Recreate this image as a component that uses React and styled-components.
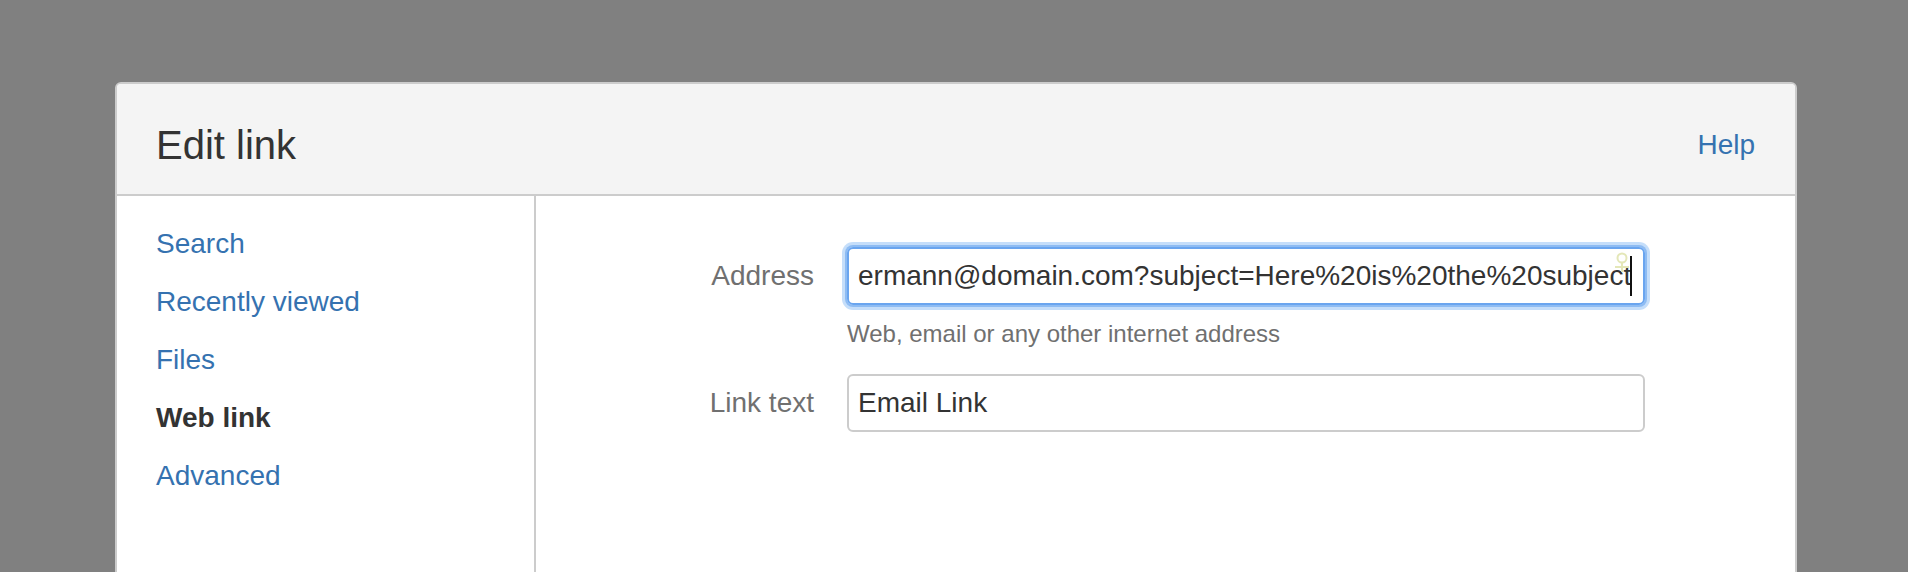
import React from "react";
import styled, { createGlobalStyle } from "styled-components";

const GlobalStyle = createGlobalStyle`
  html, body {
    margin: 0;
    padding: 0;
    background: #808080;
    overflow: hidden;
    font-family: "Liberation Sans", Arial, sans-serif;
  }
`;

const Page = styled.div`
  width: 1908px;
  height: 572px;
  padding: 82px 0 0 115px;
  box-sizing: border-box;
  display: flex;
`;

const Dialog = styled.div`
  width: 1682px;
  height: 620px;
  box-sizing: border-box;
  background: #fff;
  border: 2px solid #cccccc;
  border-radius: 6px;
  display: flex;
  flex-direction: column;
  overflow: hidden;
  flex-shrink: 0;
`;

const Header = styled.div`
  height: 112px;
  box-sizing: border-box;
  padding: 38px 40px 0 39px;
  background: #f4f4f4;
  border-bottom: 2px solid #cccccc;
  display: flex;
  justify-content: space-between;
  align-items: flex-start;
`;

const Title = styled.h2`
  margin: 0;
  font-size: 40px;
  line-height: 46px;
  font-weight: normal;
  color: #333333;
`;

const HelpLink = styled.a`
  margin-top: 7px;
  font-size: 28px;
  line-height: 32px;
  color: #3572b0;
  text-decoration: none;
`;

const Body = styled.div`
  flex: 1;
  display: grid;
  grid-template-columns: 419px 1fr;
`;

const Sidebar = styled.nav`
  border-right: 2px solid #cccccc;
  padding: 19px 0 0 39px;
  display: flex;
  flex-direction: column;
`;

const NavItem = styled.a`
  font-size: 28px;
  line-height: 58px;
  color: ${(p) => (p.$active ? "#333333" : "#3572b0")};
  font-weight: ${(p) => (p.$active ? "bold" : "normal")};
  text-decoration: none;
`;

const Form = styled.div`
  padding-top: 51px;
  display: grid;
  grid-template-columns: 278px 798px;
  column-gap: 33px;
  row-gap: 26px;
  align-content: start;
`;

const Label = styled.label`
  font-size: 28px;
  line-height: 58px;
  color: #707070;
  text-align: right;
`;

const Field = styled.div`
  display: flex;
  flex-direction: column;
`;

const InputBox = styled.div`
  position: relative;
  height: 58px;
  box-sizing: border-box;
  border: 2px solid ${(p) => (p.$focused ? "#6aa5ef" : "#cccccc")};
  border-radius: 6px;
  padding: 0 9px;
  display: flex;
  align-items: center;
  font-size: 28px;
  color: #333333;
  white-space: nowrap;
  box-shadow: ${(p) =>
    p.$focused ? "0 0 0 2px #8ebcf3, 0 0 0 5px rgba(150, 195, 245, 0.55)" : "none"};
`;

const Caret = styled.span`
  display: inline-block;
  width: 2px;
  height: 40px;
  background: #111;
  margin-left: -1px;
`;

const KeyIcon = styled.svg`
  position: absolute;
  top: 2px;
  right: 11px;
`;

const Hint = styled.div`
  margin-top: 15px;
  font-size: 24px;
  line-height: 28px;
  color: #707070;
`;

const navItems = ["Search", "Recently viewed", "Files", "Web link", "Advanced"];

export default function App() {
  return (
    <>
      <GlobalStyle />
      <Page>
        <Dialog>
          <Header>
            <Title>Edit link</Title>
            <HelpLink href="#">Help</HelpLink>
          </Header>
          <Body>
            <Sidebar>
              {navItems.map((item) => (
                <NavItem key={item} href="#" $active={item === "Web link"}>
                  {item}
                </NavItem>
              ))}
            </Sidebar>
            <Form>
              <Label>Address</Label>
              <Field>
                <InputBox $focused>
                  ermann@domain.com?subject=Here%20is%20the%20subject
                  <Caret />
                  <KeyIcon width="20" height="22" viewBox="0 0 20 22">
                    <circle cx="10" cy="7" r="4.5" fill="none" stroke="#e4e7b8" strokeWidth="2" />
                    <line x1="10" y1="11.5" x2="10" y2="21" stroke="#e4e7b8" strokeWidth="2" />
                    <line x1="3" y1="16" x2="17" y2="16" stroke="#e4e7b8" strokeWidth="2" />
                  </KeyIcon>
                </InputBox>
                <Hint>Web, email or any other internet address</Hint>
              </Field>
              <Label>Link text</Label>
              <Field>
                <InputBox>Email Link</InputBox>
              </Field>
            </Form>
          </Body>
        </Dialog>
      </Page>
    </>
  );
}
